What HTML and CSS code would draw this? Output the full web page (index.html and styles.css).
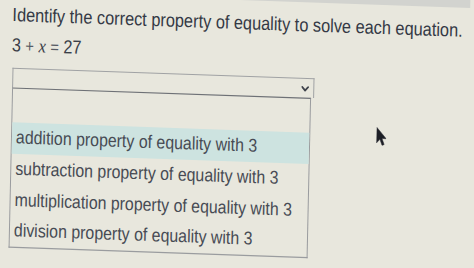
FILE: index.html
```html
<!DOCTYPE html>
<html lang="en">
<head>
<meta charset="utf-8">
<title>Property of equality</title>
<link rel="stylesheet" href="styles.css">
</head>
<body>
<div class="screen">
  <div class="topbar"></div>
  <div class="content">
    <p class="prompt">Identify the correct property of equality to solve each equation.</p>
    <p class="equation"><span class="num">3</span> <span class="op">+</span> <span class="var">x</span> <span class="op">=</span> <span class="num">27</span></p>
    <div class="select">
      <svg class="chev" viewBox="0 0 9 6" preserveAspectRatio="none"><polyline points="1,1 4.5,4.5 8,1" fill="none" stroke="#3f434b" stroke-width="2" stroke-linecap="round" stroke-linejoin="round"/></svg>
    </div>
    <ul class="options">
      <li class="blank"></li>
      <li class="active">addition property of equality with 3</li>
      <li>subtraction property of equality with 3</li>
      <li>multiplication property of equality with 3</li>
      <li>division property of equality with 3</li>
    </ul>
  </div>
  <svg class="cursor" viewBox="0 0 12 19" preserveAspectRatio="none"><path d="M0.5 0.5 L0.5 16 L4.3 12.3 L7 18.5 L9.3 17.5 L6.7 11.5 L11.5 11.5 Z" fill="#1d1f26" stroke="#2a2c33" stroke-width="0.6"/></svg>
</div>
</body>
</html>
```
FILE: styles.css
```css
html, body {
  margin: 0;
  width: 474px;
  height: 268px;
  overflow: hidden;
  background: #e8e7dd;
}

/* the photographed screen: slightly tilted and stretched upward */
.screen {
  position: relative;
  width: 464px;
  margin: -17.2px 0 0 6px;
  transform-origin: 0 17.2px;
  transform: skewY(2deg) skewX(-1.26deg) scaleY(1.163);
  font-family: "Liberation Sans", Arial, sans-serif;
}

.topbar {
  height: 9.5px;
  background: #d2d3cf;
}

.content {
  padding: 10.3px 0 0 7.7px;
}

.prompt {
  margin: 0 0 0 -0.9px;
  font-size: 16.34px;
  line-height: 18.92px;
  color: #343945;
  white-space: nowrap;
}

.equation {
  margin: 6.9px 0 0 -0.9px;
  font-size: 16.34px;
  line-height: 18.92px;
  color: #3b3f49;
  white-space: nowrap;
}

.equation .op {
  font-size: 14.6px;
  color: #575b64;
}

.equation .var {
  font-family: "Liberation Serif", "Times New Roman", serif;
  font-style: italic;
}

.select {
  width: 302.7px;
  height: 17.2px;
  margin-top: 9.46px;
  box-sizing: border-box;
  border: 1px solid #a0a2a4;
  border-bottom: 0;
  display: flex;
  justify-content: flex-end;
  align-items: center;
  padding: 1.7px 4.3px 0 0;
}

.chev {
  display: block;
  width: 7.7px;
  height: 5.2px;
}

.options {
  margin: 0;
  padding: 0;
  list-style: none;
  width: 299.3px;
  box-sizing: border-box;
  border: 1px solid #9a9c9f;
  border-top: 1.72px solid #6e7176;
  font-size: 15.9px;
  color: #474b54;
}

.options li {
  height: 26.66px;
  line-height: 26.66px;
  padding-left: 4.3px;
  white-space: nowrap;
}

.options .blank {
  height: 29.23px;
}

.options .active {
  background: #cde3e0;
}

.cursor {
  position: absolute;
  left: 373.2px;
  top: 115.2px;
  width: 10.3px;
  height: 16.3px;
}
```
